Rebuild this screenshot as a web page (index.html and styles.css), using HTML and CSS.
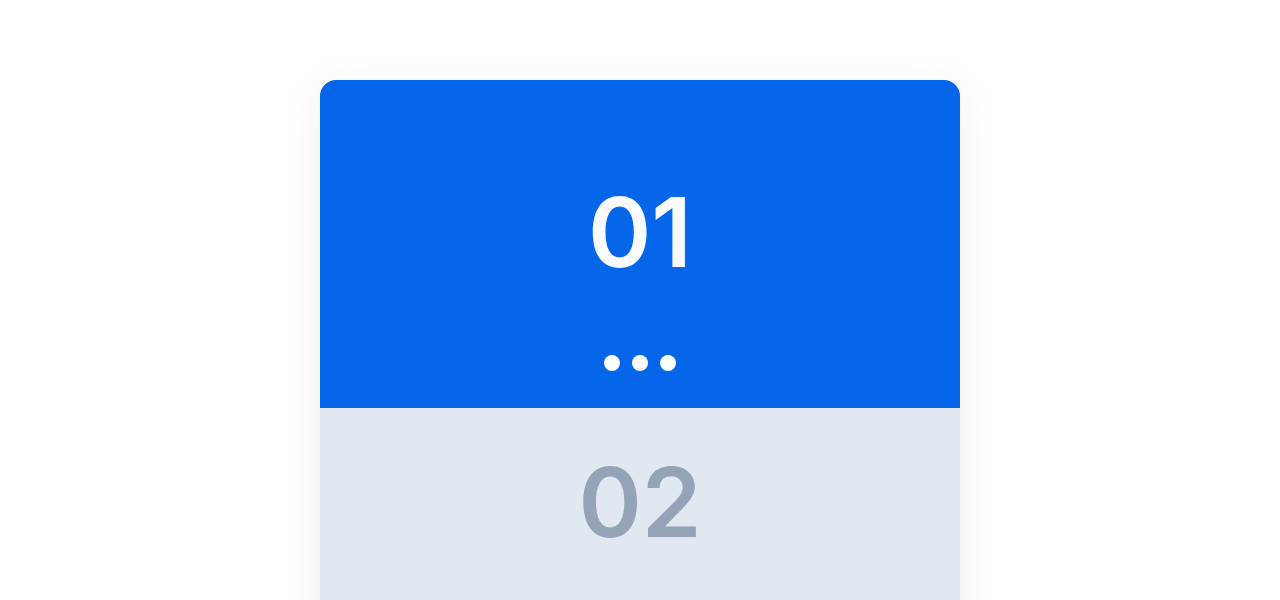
FILE: index.html
```html
<!DOCTYPE html>
<html lang="en">
<head>
    <meta charset="UTF-8">
    <meta name="viewport" content="width=device-width, initial-scale=1.0">
    <title>Steps</title>
    <link rel="stylesheet" href="styles.css">
</head>
<body>
<div class="stack">
    <section class="panel panel-active">
        <div class="panel-num">01</div>
        <div class="dots">
            <span class="dot"></span>
            <span class="dot"></span>
            <span class="dot"></span>
        </div>
    </section>
    <section class="panel panel-next">
        <div class="panel-num">02</div>
    </section>
</div>
</body>
</html>
```

FILE: styles.css
```css
body {
    margin: 0;
    background: #ffffff;
    font-family: Inter, "Noto Sans", sans-serif;
}

.stack {
    width: 640px;
    margin: 80px auto 0;
    border-radius: 16px;
    overflow: hidden;
    box-shadow: 0 8px 40px rgba(15, 23, 42, 0.08);
}

.panel {
    display: flex;
    flex-direction: column;
    align-items: center;
}

.panel-num {
    font-size: 96px;
    line-height: 1;
    font-weight: 600;
}

.panel-active {
    height: 328px;
    box-sizing: border-box;
    padding-top: 104px;
    background: #0566ea;
    color: #f8fafc;
}

.dots {
    display: flex;
    gap: 12px;
    margin-top: 75px;
}

.dot {
    width: 16px;
    height: 16px;
    border-radius: 50%;
    background: #ffffff;
}

.panel-next {
    height: 328px;
    box-sizing: border-box;
    padding-top: 46px;
    background: #e2e8f0;
    color: #94a3b8;
}
```
